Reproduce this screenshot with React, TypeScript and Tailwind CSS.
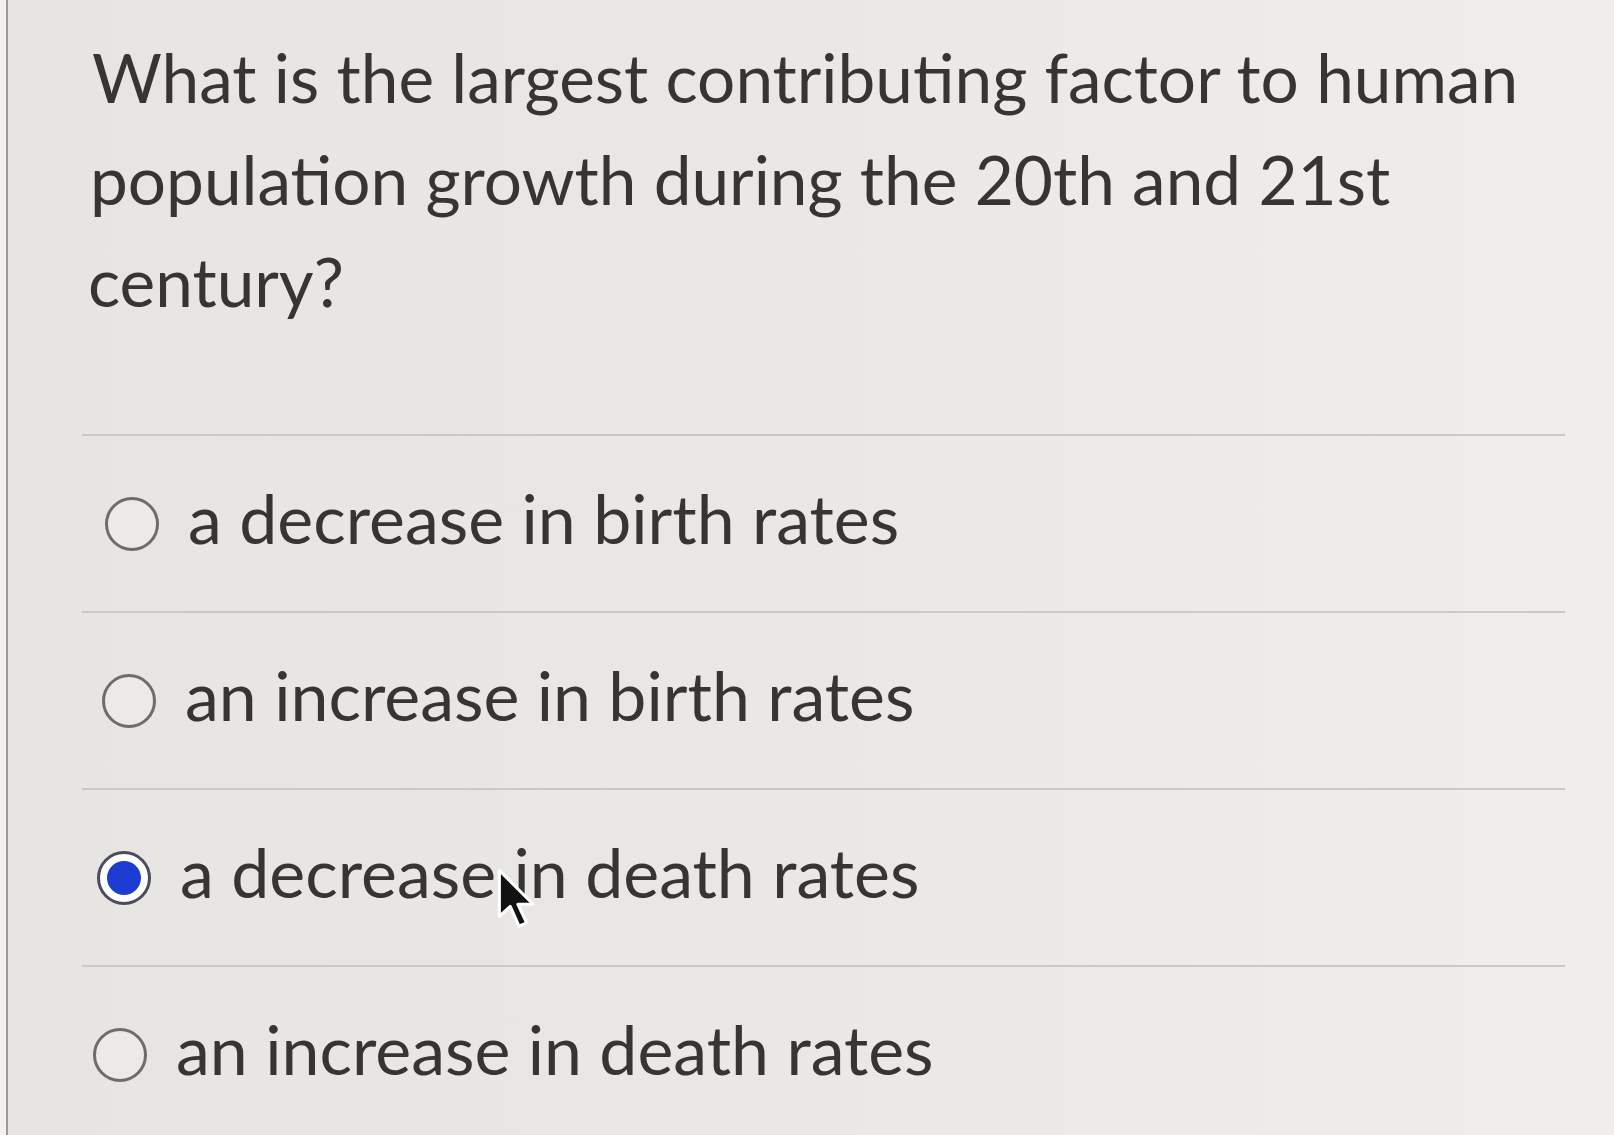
import React from 'react'

const options = [
  { label: 'a decrease in birth rates', selected: false, pad: 'pl-[97px]' },
  { label: 'an increase in birth rates', selected: false, pad: 'pl-[94px]' },
  { label: 'a decrease in death rates', selected: true, pad: 'pl-[89px]' },
  { label: 'an increase in death rates', selected: false, pad: 'pl-[85px]' },
]

function Radio({ selected }: { selected: boolean }) {
  if (selected) {
    return (
      <span className="flex h-[54px] w-[54px] shrink-0 items-center justify-center rounded-full border-[3px] border-[#4b4a5e] bg-white">
        <span className="h-[34px] w-[34px] rounded-full bg-[#1c3cd2]" />
      </span>
    )
  }
  return <span className="h-[54px] w-[54px] shrink-0 rounded-full border-[3px] border-[#6e6c6a] bg-[#eceae6]" />
}

function Cursor() {
  return (
    <svg className="absolute left-[495px] top-[868px]" width="48" height="66" viewBox="0 0 22 30">
      <path
        d="M2 1 L2 22 L7 17.5 L11 26.5 L14.5 25 L10.5 16.5 L17.5 16.5 Z"
        fill="#111"
        stroke="#fff"
        strokeWidth="1.4"
        strokeLinejoin="round"
      />
    </svg>
  )
}

export default function App() {
  return (
    <div className="relative flex min-h-[1135px] w-full overflow-hidden bg-[#f1f0ee] font-['Lato',sans-serif] text-[#363534]">
      {/* left frame edge */}
      <div className="w-[6px] shrink-0 bg-[#f3f2f1]" />
      <div className="w-[2px] shrink-0 bg-[#9d9996]" />

      <div className="flex-1 bg-gradient-to-r from-[#e7e5e1] via-[#eae8e4] to-[#efeeea]">
        {/* question */}
        <div className="pl-[84px] pt-[26px] text-[67.5px] leading-[102px]">
          <p>What is the largest contributing factor to human</p>
          <p className="-ml-[2px]">population growth during the 20th and 21st</p>
          <p className="-ml-[4px]">century?</p>
        </div>

        {/* answers */}
        <div className="mt-[102px]">
          {options.map(opt => (
            <div key={opt.label}>
              <div className="ml-[74px] mr-[49px] h-[2px] bg-[#cbc9c5]" />
              <div className={`flex h-[175px] items-center gap-[29px] ${opt.pad}`}>
                <Radio selected={opt.selected} />
                <span className="mb-[12px] text-[68px] leading-none">{opt.label}</span>
              </div>
            </div>
          ))}
        </div>
      </div>

      <Cursor />
    </div>
  )
}
